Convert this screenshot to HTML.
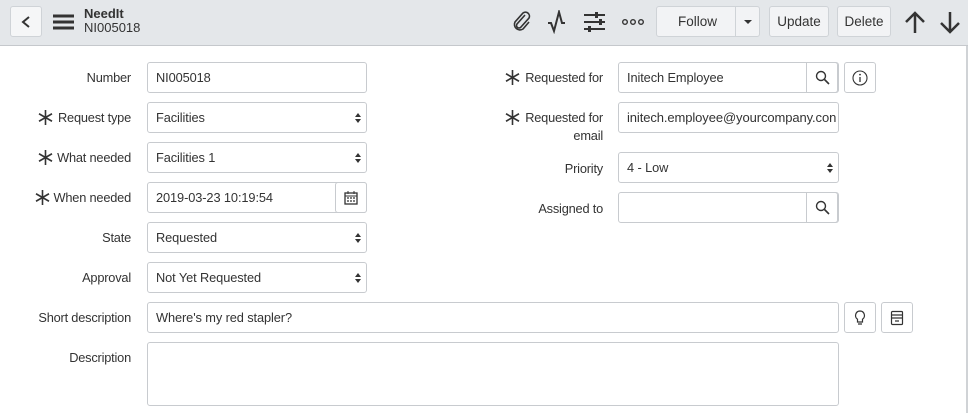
<!DOCTYPE html><html><head><style>
*{box-sizing:border-box}body{margin:0;width:968px;height:413px;overflow:hidden;font-family:"Liberation Sans",sans-serif;font-size:13.5px;color:#333;background:#fff}
.hdr{position:absolute;left:0;top:0;width:968px;height:46px;background:#e4e7ea;border-bottom:1px solid #c5c8cc}
.btn{position:absolute;border:1px solid #cfd3d7;border-radius:3px;background:#f2f3f5;color:#333;font-size:13.5px;display:flex;align-items:center;justify-content:center}
.lbl{position:absolute;text-align:right;font-size:12.8px;color:#333;line-height:18px;letter-spacing:-0.2px}
.in{position:absolute;height:31px;border:1px solid #c8cbcf;border-radius:3px;background:#fff;padding-left:8px;line-height:29px;font-size:12.8px;color:#333;white-space:nowrap;overflow:hidden;letter-spacing:-0.1px}
.sel::after{content:"";position:absolute;right:5px;top:10px;border:3.5px solid transparent;border-bottom:4px solid #333;border-top:0}
.sel::before{content:"";position:absolute;right:5px;top:16px;border:3.5px solid transparent;border-top:4px solid #333;border-bottom:0}
.ib{position:absolute;height:31px;width:32px;border:1px solid #c8cbcf;border-radius:3px;background:#fff;display:flex;align-items:center;justify-content:center}
.star{position:absolute;width:15px;height:15px}
.side{position:absolute;right:0;top:46px;width:2px;height:367px;background:#d0d3d6}
</style></head><body>
<svg width="0" height="0" style="position:absolute"><defs><g id="st"><path d="M7.5 0v15M1 3.75l13 7.5M1 11.25l13-7.5" stroke="#333" stroke-width="1.6"/></g></defs></svg>
<div class="hdr">
<div class="btn" style="left:10px;top:6px;width:32px;height:31px;background:#f5f6f7"><svg width="12" height="14"><path d="M9 2L3 7l6 5" fill="none" stroke="#333" stroke-width="2"/></svg></div>
<svg style="position:absolute;left:53px;top:14px" width="21" height="16"><path d="M0 2h21M0 8h21M0 14h21" stroke="#333" stroke-width="3"/></svg>
<div style="position:absolute;left:84px;top:7px;font-size:13px;line-height:14px;color:#333"><b style="font-weight:600">NeedIt</b><br>NI005018</div>
<svg style="position:absolute;left:510px;top:10px" width="24" height="24"><path d="M15 5L7 14a2.5 2.5 0 0 0 4 3l8-9a4 4 0 0 0-6-5L5 12a5.5 5.5 0 0 0 8 7l6-7" fill="none" stroke="#333" stroke-width="1.6"/></svg>
<svg style="position:absolute;left:547px;top:10px" width="24" height="24"><path d="M1 13h3l3 8 5-19 3 11h3" fill="none" stroke="#333" stroke-width="2"/></svg>
<svg style="position:absolute;left:584px;top:11px" width="22" height="22"><path d="M0 4h21M0 11h21M0 18h21" stroke="#333" stroke-width="2"/><rect x="11" y="1" width="3" height="6" fill="#333"/><rect x="15" y="8" width="3" height="6" fill="#333"/><rect x="4" y="15" width="3" height="6" fill="#333"/></svg>
<svg style="position:absolute;left:622px;top:18px" width="22" height="8"><circle cx="3" cy="4" r="2.3" fill="none" stroke="#333" stroke-width="1.4"/><circle cx="11" cy="4" r="2.3" fill="none" stroke="#333" stroke-width="1.4"/><circle cx="19" cy="4" r="2.3" fill="none" stroke="#333" stroke-width="1.4"/></svg>
<div class="btn" style="left:656px;top:6px;width:104px;height:31px;justify-content:flex-start;padding-left:21px">Follow<span style="position:absolute;left:78px;top:0;width:1px;height:29px;background:#cfd3d7"></span><span style="position:absolute;left:87px;top:13px;border:4px solid transparent;border-top:4px solid #333;border-bottom:0"></span></div>
<div class="btn" style="left:769px;top:6px;width:60px;height:31px">Update</div>
<div class="btn" style="left:837px;top:6px;width:54px;height:31px">Delete</div>
<svg style="position:absolute;left:904px;top:11px" width="22" height="24"><path d="M11 22V2M2 11l9-9 9 9" fill="none" stroke="#333" stroke-width="2.5"/></svg>
<svg style="position:absolute;left:939px;top:11px" width="22" height="24"><path d="M11 1v20M2 12l9 9 9-9" fill="none" stroke="#333" stroke-width="2.5"/></svg>
</div>
<div class="side"></div>

<div class="lbl" style="right:837px;top:69px">Number</div>
<div class="in" style="left:147px;top:62px;width:220px">NI005018</div>
<svg class="star" style="left:38px;top:110px"><use href="#st"/></svg><div class="lbl" style="right:837px;top:109px">Request type</div>
<div class="in sel" style="left:147px;top:102px;width:220px">Facilities</div>
<svg class="star" style="left:38px;top:150px"><use href="#st"/></svg><div class="lbl" style="right:837px;top:149px">What needed</div>
<div class="in sel" style="left:147px;top:142px;width:220px">Facilities 1</div>
<svg class="star" style="left:35px;top:190px"><use href="#st"/></svg><div class="lbl" style="right:837px;top:189px">When needed</div>
<div class="in" style="left:147px;top:182px;width:220px">2019-03-23 10:19:54</div>
<div class="ib" style="left:335px;top:182px"><svg width="14" height="14"><rect x="1" y="2" width="12" height="11" fill="none" stroke="#333" stroke-width="1.3"/><path d="M1 5h12M4 0v3M10 0v3" stroke="#333"/><path d="M3 7h2M6 7h2M9 7h2M3 10h2M6 10h2M9 10h2" stroke="#333" stroke-width="1.3"/></svg></div>
<div class="lbl" style="right:837px;top:229px">State</div>
<div class="in sel" style="left:147px;top:222px;width:220px">Requested</div>
<div class="lbl" style="right:837px;top:269px">Approval</div>
<div class="in sel" style="left:147px;top:262px;width:220px">Not Yet Requested</div>
<div class="lbl" style="right:837px;top:309px">Short description</div>
<div class="in" style="left:147px;top:302px;width:692px">Where's my red stapler?</div>
<div class="ib" style="left:844px;top:302px"><svg width="12" height="16"><path d="M6 1a4.5 4.5 0 0 0-2.5 8.2V12h5V9.2A4.5 4.5 0 0 0 6 1zM4 14h4" fill="none" stroke="#333" stroke-width="1.2"/></svg></div>
<div class="ib" style="left:881px;top:302px"><svg width="14" height="16"><rect x="1.5" y="1.5" width="11" height="13" rx="1" fill="none" stroke="#333" stroke-width="1.2"/><path d="M1.5 5h11M1.5 8h11M5 11h4" stroke="#333" stroke-width="1.2"/></svg></div>
<div class="lbl" style="right:837px;top:349px">Description</div>
<div class="in" style="left:147px;top:342px;width:692px;height:64px"></div>

<svg class="star" style="left:505px;top:70px"><use href="#st"/></svg><div class="lbl" style="right:365px;top:69px">Requested for</div>
<div class="in" style="left:618px;top:62px;width:221px">Initech Employee</div>
<div class="ib" style="left:806px;top:62px;border-radius:0 3px 3px 0"><svg width="15" height="15"><circle cx="6" cy="6" r="4.5" fill="none" stroke="#333" stroke-width="1.4"/><path d="M9.5 9.5L14 14" stroke="#333" stroke-width="1.6"/></svg></div>
<div class="ib" style="left:844px;top:62px"><svg width="16" height="16"><circle cx="8" cy="8" r="7" fill="none" stroke="#333" stroke-width="1.1"/><path d="M8 7v5" stroke="#333" stroke-width="1.3"/><circle cx="8" cy="4.6" r="0.9" fill="#333"/></svg></div>
<svg class="star" style="left:505px;top:110px"><use href="#st"/></svg><div class="lbl" style="right:365px;top:109px">Requested for<br>email</div>
<div class="in" style="left:618px;top:102px;width:221px;font-size:13px">initech.employee@yourcompany.con</div>
<div class="lbl" style="right:365px;top:160px">Priority</div>
<div class="in sel" style="left:618px;top:152px;width:221px">4 - Low</div>
<div class="lbl" style="right:365px;top:200px">Assigned to</div>
<div class="in" style="left:618px;top:192px;width:221px"></div>
<div class="ib" style="left:806px;top:192px;border-radius:0 3px 3px 0"><svg width="15" height="15"><circle cx="6" cy="6" r="4.5" fill="none" stroke="#333" stroke-width="1.4"/><path d="M9.5 9.5L14 14" stroke="#333" stroke-width="1.6"/></svg></div>
</body></html>
